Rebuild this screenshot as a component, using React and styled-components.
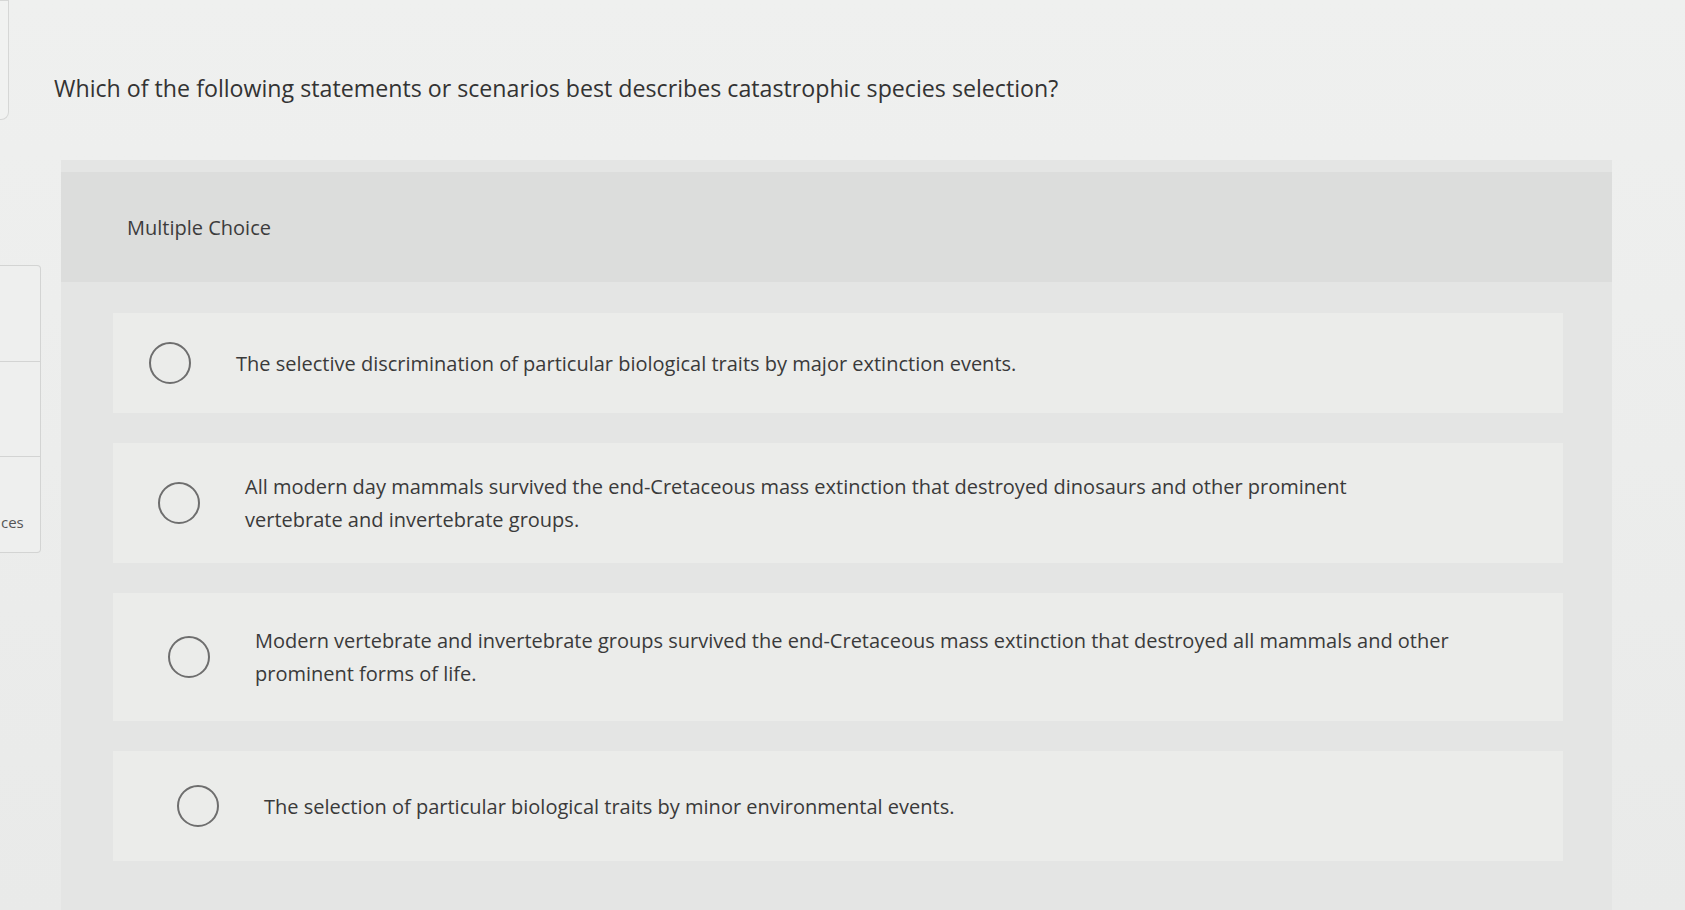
import React from "react";
import styled, { createGlobalStyle } from "styled-components";

const GlobalStyle = createGlobalStyle`
  html, body {
    margin: 0;
    padding: 0;
    background: #ecedec;
    font-family: "Open Sans", Lato, "Liberation Sans", sans-serif;
    color: #3a3a3a;
  }
`;

const Page = styled.div`
  display: flex;
  width: 1685px;
  height: 910px;
  overflow: hidden;
  background: linear-gradient(180deg, #eff0ef 0%, #e9eae9 100%);
`;

const Sidebar = styled.div`
  width: 42px;
  flex-shrink: 0;
  display: flex;
  flex-direction: column;
`;

const TopTab = styled.div`
  height: 118px;
  width: 8px;
  border: 1px solid #d6d7d6;
  border-left: none;
  border-radius: 0 0 8px 0;
  background: #f1f2f1;
`;

const NavBox = styled.div`
  margin-top: 145px;
  width: 40px;
  height: 286px;
  border: 1px solid #d3d4d3;
  border-left: none;
  border-radius: 0 4px 4px 0;
  background: #eeefee;
  display: flex;
  flex-direction: column;
`;

const NavItem = styled.div`
  flex: 1;
  border-bottom: ${(p) => (p.$last ? "none" : "1px solid #d3d4d3")};
  display: flex;
  align-items: flex-end;
  padding-bottom: 20px;
  padding-left: 1px;
  font-size: 15px;
  color: #555;
`;

const Main = styled.div`
  flex: 1;
  padding: 72px 73px 0 12px;
  display: flex;
  flex-direction: column;
`;

const Question = styled.h1`
  margin: 0 0 56px;
  font-size: 23.2px;
  line-height: 32px;
  font-weight: 400;
  color: #333;
`;

const Panel = styled.div`
  margin-left: 7px;
  background: #e4e5e4;
  flex: 1;
  display: flex;
  flex-direction: column;
  padding-top: 12px;
`;

const PanelHeader = styled.div`
  height: 110px;
  background: #dcdddc;
  display: flex;
  align-items: center;
  padding-left: 66px;
  font-size: 20px;
  color: #3c3c3c;
`;

const Options = styled.div`
  padding: 31px 49px 0 52px;
  display: flex;
  flex-direction: column;
  gap: 30px;
`;

const Option = styled.label`
  display: flex;
  align-items: center;
  height: ${(p) => p.$h}px;
  background: #ebecea;
  padding-left: ${(p) => p.$indent}px;
  cursor: pointer;
`;

const Radio = styled.span`
  width: 42px;
  height: 42px;
  border: 2px solid #6e6e6e;
  border-radius: 50%;
  flex-shrink: 0;
  box-sizing: border-box;
  margin-right: 45px;
`;

const OptionText = styled.span`
  font-size: 20px;
  line-height: 33px;
  color: #3a3a3a;
  max-width: ${(p) => p.$max}px;
`;

const options = [
  { text: "The selective discrimination of particular biological traits by major extinction events.", h: 100, indent: 36, max: 1200 },
  { text: "All modern day mammals survived the end-Cretaceous mass extinction that destroyed dinosaurs and other prominent vertebrate and invertebrate groups.", h: 120, indent: 45, max: 1130 },
  { text: "Modern vertebrate and invertebrate groups survived the end-Cretaceous mass extinction that destroyed all mammals and other prominent forms of life.", h: 128, indent: 55, max: 1230 },
  { text: "The selection of particular biological traits by minor environmental events.", h: 110, indent: 64, max: 1200 },
];

export default function App() {
  return (
    <>
      <GlobalStyle />
      <Page>
        <Sidebar>
          <TopTab />
          <NavBox>
            <NavItem />
            <NavItem />
            <NavItem $last>ces</NavItem>
          </NavBox>
        </Sidebar>
        <Main>
          <Question>Which of the following statements or scenarios best describes catastrophic species selection?</Question>
          <Panel>
            <PanelHeader>Multiple Choice</PanelHeader>
            <Options>
              {options.map((o, i) => (
                <Option key={i} $h={o.h} $indent={o.indent}>
                  <Radio />
                  <OptionText $max={o.max}>{o.text}</OptionText>
                </Option>
              ))}
            </Options>
          </Panel>
        </Main>
      </Page>
    </>
  );
}
